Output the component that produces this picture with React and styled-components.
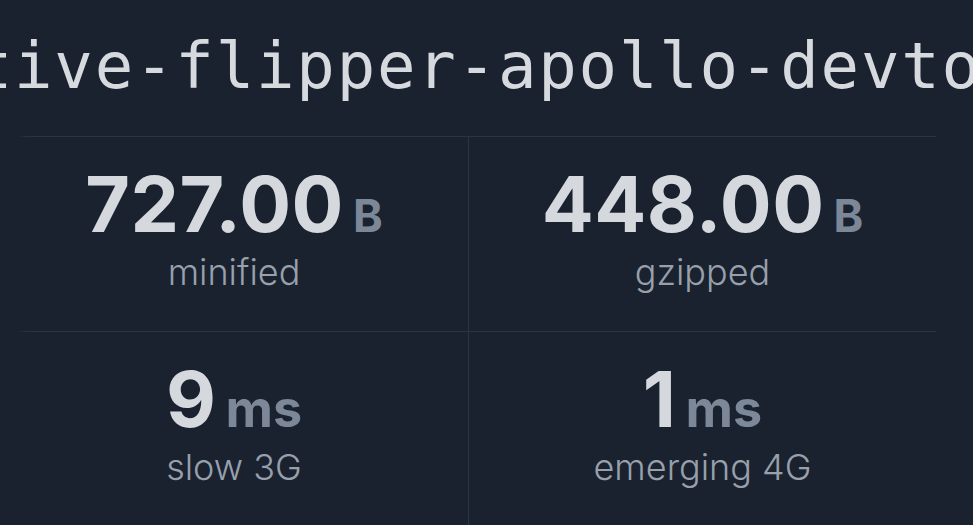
import styled, { createGlobalStyle } from "styled-components";

const GlobalStyle = createGlobalStyle`
  html, body {
    margin: 0;
    background: #1a2230;
  }
  body {
    font-family: Inter, "Noto Sans", sans-serif;
    overflow: hidden;
  }
`;

const Page = styled.main`
  width: 973px;
  height: 525px;
  overflow: hidden;
  background: #1a2230;
`;

const Title = styled.h1`
  margin: 0;
  height: 136px;
  padding-top: 30px;
  box-sizing: border-box;
  font-family: "DejaVu Sans Mono", monospace;
  font-weight: 400;
  font-size: 64px;
  letter-spacing: 1.8px;
  line-height: 72px;
  color: #d6d9de;
  white-space: nowrap;
  overflow: hidden;

  span {
    display: inline-block;
    margin-left: -349px;
  }
`;

const Grid = styled.section`
  width: 936px;
`;

const Row = styled.div`
  display: grid;
  grid-template-columns: 469px 467px;
  height: 195px;
  box-sizing: border-box;
  border-top: 1px solid #2b3441;
  border-image: linear-gradient(to right, transparent 19px, #2b3441 28px) 1;
`;

const Cell = styled.div`
  display: flex;
  flex-direction: column;
  align-items: center;
  box-sizing: border-box;

  &:first-child {
    border-right: 1px solid #2c3542;
  }
`;

const Value = styled.div`
  margin-top: 29px;
  font-size: 77px;
  line-height: 77px;
  font-weight: 700;
  letter-spacing: 0.5px;
  color: #d5d8dd;
  white-space: nowrap;
`;

const Unit = styled.span`
  margin-left: 9px;
  font-size: ${({ $size }) => $size}px;
  line-height: 0;
  letter-spacing: 0;
  font-weight: 700;
  color: #7c8798;
`;

const Label = styled.div`
  margin-top: 11px;
  font-size: 36px;
  line-height: 36px;
  font-weight: 300;
  color: #97a0ab;
  white-space: nowrap;
`;

const stats = [
  [
    { value: "727.00", unit: "B", size: 45, label: "minified" },
    { value: "448.00", unit: "B", size: 45, label: "gzipped" },
  ],
  [
    { value: "9", unit: "ms", size: 52, label: "slow 3G" },
    { value: "1", unit: "ms", size: 52, label: "emerging 4G" },
  ],
];

const App = () => {
  return (
    <Page>
      <GlobalStyle />
      <Title>
        <span>react-native-flipper-apollo-devtools</span>
      </Title>
      <Grid>
        {stats.map((row, i) => (
          <Row key={i}>
            {row.map((s) => (
              <Cell key={s.label}>
                <Value>
                  {s.value}
                  <Unit $size={s.size}>{s.unit}</Unit>
                </Value>
                <Label>{s.label}</Label>
              </Cell>
            ))}
          </Row>
        ))}
      </Grid>
    </Page>
  );
};

export default App;
